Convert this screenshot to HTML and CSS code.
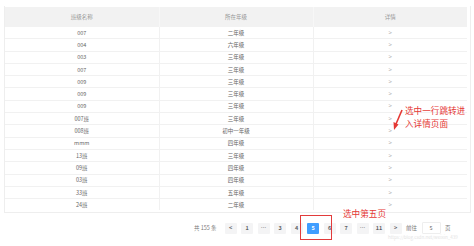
FILE: index.html
```html
<!DOCTYPE html>
<html>
<head>
  <meta charset="UTF-8">
  <title>班级列表</title>
  <link rel="stylesheet" href="styles.css">
</head>
<body>
  <div class="page">
    <div class="card">
      <table class="grid">
        <thead>
          <tr><th>班级名称</th><th>所在年级</th><th>详情</th></tr>
        </thead>
        <tbody>
          <tr><td>007</td><td>二年级</td><td class="more">&gt;</td></tr>
          <tr><td>004</td><td>六年级</td><td class="more">&gt;</td></tr>
          <tr><td>003</td><td>三年级</td><td class="more">&gt;</td></tr>
          <tr><td>007</td><td>三年级</td><td class="more">&gt;</td></tr>
          <tr><td>009</td><td>三年级</td><td class="more">&gt;</td></tr>
          <tr><td>009</td><td>三年级</td><td class="more">&gt;</td></tr>
          <tr><td>009</td><td>三年级</td><td class="more">&gt;</td></tr>
          <tr><td>007班</td><td>三年级</td><td class="more">&gt;</td></tr>
          <tr><td>008班</td><td>初中一年级</td><td class="more">&gt;</td></tr>
          <tr><td>mmm</td><td>四年级</td><td class="more">&gt;</td></tr>
          <tr><td>13班</td><td>三年级</td><td class="more">&gt;</td></tr>
          <tr><td>09班</td><td>四年级</td><td class="more">&gt;</td></tr>
          <tr><td>03班</td><td>四年级</td><td class="more">&gt;</td></tr>
          <tr><td>33班</td><td>五年级</td><td class="more">&gt;</td></tr>
          <tr><td>24班</td><td>二年级</td><td class="more">&gt;</td></tr>
        </tbody>
      </table>
    </div>

    <div class="pager">
      <span class="total">共 155 条</span>
      <span class="btn">&lt;</span>
      <span class="btn">1</span>
      <span class="btn">…</span>
      <span class="btn">3</span>
      <span class="btn">4</span>
      <span class="btn active">5</span>
      <span class="btn">6</span>
      <span class="btn">7</span>
      <span class="btn">…</span>
      <span class="btn">11</span>
      <span class="btn">&gt;</span>
      <span class="jump">前往</span>
      <span class="jump-input">5</span>
      <span class="jump">页</span>
    </div>

    <!-- annotations drawn over the screenshot -->
    <div class="mark-box"></div>
    <div class="note note-page">选中第五页</div>
    <div class="note note-row">选中一行跳转进<br>入详情页面</div>
    <svg class="arrow" width="14" height="22" viewBox="0 0 14 22">
      <path d="M11 1 L5 15" stroke="#e53935" stroke-width="1.6" fill="none"/>
      <path d="M2.5 13 L7.5 15.5 L3 21 Z" fill="#e53935"/>
    </svg>
    <div class="watermark">https://blog.csdn.net/weixin_439</div>
  </div>
</body>
</html>
```

FILE: styles.css
```css
body {
  margin: 0;
  background: #fff;
  font-family: "Noto Sans CJK SC", "Noto Sans", sans-serif;
  color: #666;
}

.page {
  position: relative;
  width: 474px;
  height: 246px;
  overflow: hidden;
}

.card {
  margin: 6px 4px 0 4px;
  padding: 1px 3px 2px 0;
  border: 1px solid #eee;
  border-top: none;
  width: 462px;
}

.grid {
  width: 462px;
  border-collapse: collapse;
  table-layout: fixed;
  font-size: 5.5px;
}

.grid th {
  height: 20px;
  padding: 0;
  background: #f2f2f2;
  color: #999;
  font-weight: normal;
  line-height: 8px;
  border-right: 1px solid #f7f7f7;
}

.grid td {
  height: 11.3px;
  padding: 0;
  text-align: center;
  line-height: 8px;
  border-bottom: 1px solid #f1f1f1;
  border-right: 1px solid #f1f1f1;
}

.grid th:last-child,
.grid td:last-child {
  border-right: none;
}

.grid tr:last-child td {
  border-bottom: none;
}

.grid td.more {
  color: #aaa;
  font-size: 6px;
}

.pager {
  display: flex;
  align-items: center;
  gap: 4.5px;
  margin: 9px 0 0 194px;
  height: 12px;
  font-size: 5.5px;
  color: #666;
  white-space: nowrap;
}

.pager span {
  flex-shrink: 0;
}

.total {
  width: 26px;
  color: #777;
}

.btn {
  width: 12px;
  height: 11px;
  line-height: 11px;
  text-align: center;
  background: #f4f4f5;
  border-radius: 1px;
  font-weight: bold;
  color: #606266;
}

.btn.active {
  background: #409eff;
  color: #fff;
}

.jump {
  color: #777;
}

.jump:first-of-type {
  margin-left: 5px;
}

.jump-input {
  width: 17px;
  height: 10px;
  line-height: 10px;
  text-align: center;
  border: 1px solid #eee;
  border-radius: 1px;
}

.mark-box {
  position: absolute;
  left: 300px;
  top: 215px;
  width: 30px;
  height: 23px;
  border: 1.5px solid #e23b3b;
}

.note {
  position: absolute;
  color: #e53935;
  font-size: 8.6px;
  line-height: 12.5px;
}

.note-page {
  left: 343px;
  top: 207px;
}

.note-row {
  left: 405px;
  top: 104px;
}

.arrow {
  position: absolute;
  left: 391px;
  top: 109px;
}

.watermark {
  position: absolute;
  left: 388px;
  top: 234px;
  font-size: 4.5px;
  color: #e4e4e4;
  white-space: nowrap;
}
```
